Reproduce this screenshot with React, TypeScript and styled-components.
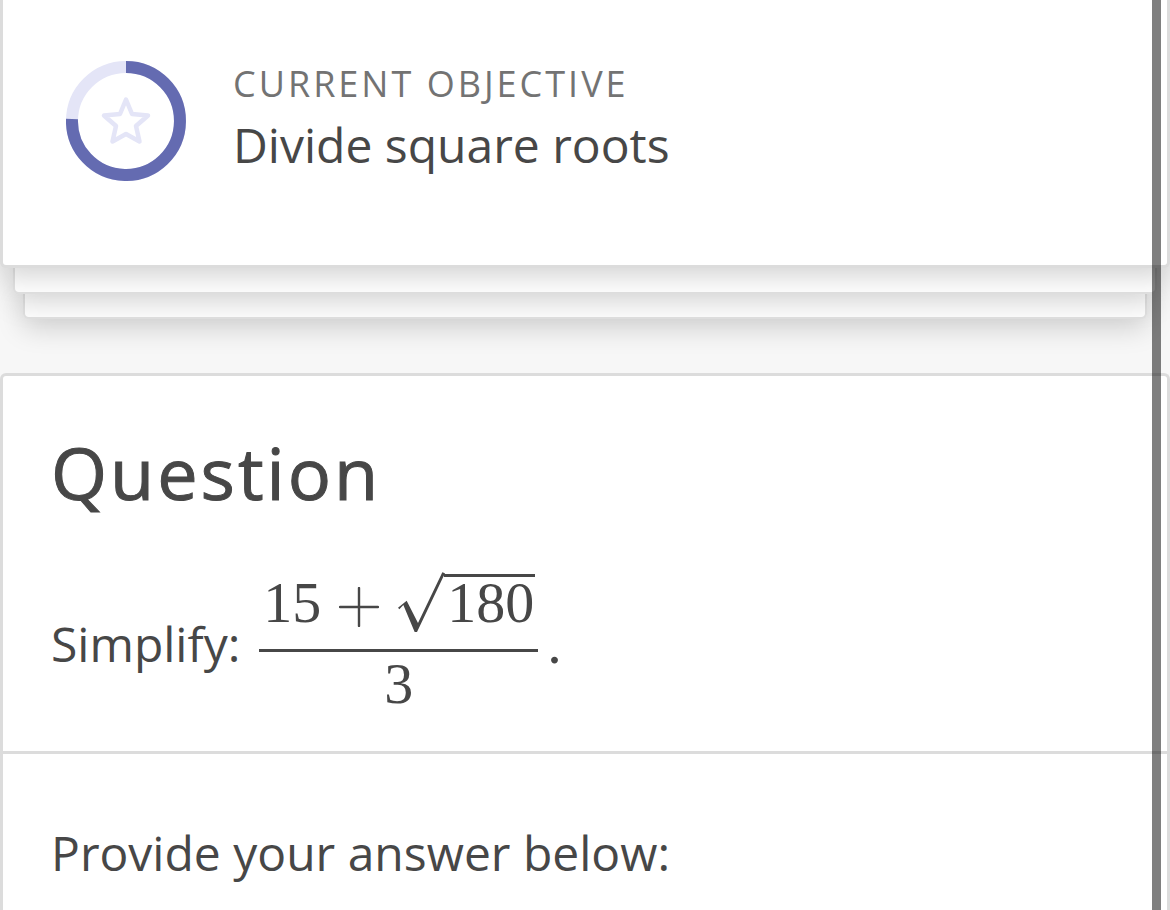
import React from 'react';
import styled, { createGlobalStyle } from 'styled-components';

const line = '#dcdcdc';
const ink = '#474747';

const GlobalStyle = createGlobalStyle`
  *, *::before, *::after { box-sizing: border-box; }
  body {
    margin: 0;
    background: #f7f7f7;
    color: ${ink};
    font-family: "Open Sans", "Noto Sans", sans-serif;
    overflow: hidden;
  }
`;

const Page = styled.main`
  display: flex;
  flex-direction: column;
  min-height: 100vh;
`;

const Stack = styled.header`
  display: flex;
  flex-direction: column;
  margin-bottom: 54px;
`;

const ObjectiveCard = styled.section`
  position: relative;
  z-index: 3;
  display: flex;
  gap: 47px;
  padding: 61px 63px 84px;
  background: #fff;
  border: 3px solid ${line};
  border-top: 0;
  border-radius: 0 0 6px 6px;
  box-shadow: 0 8px 28px rgba(0, 0, 0, 0.18);
`;

const Sheet = styled.div<{ $depth: number }>`
  position: relative;
  z-index: ${({ $depth }) => 3 - $depth};
  height: ${({ $depth }) => ($depth === 1 ? 26 : 25)}px;
  margin: 0 ${({ $depth }) => 3 + $depth * 10}px;
  background: #fff;
  border: 2px solid #e2e2e2;
  border-top: 0;
  border-radius: 0 0 6px 6px;
  box-shadow: 0 8px 28px rgba(0, 0, 0, 0.18);
`;

const Ring = styled.svg`
  flex: none;
  width: 120px;
  height: 120px;
`;

const ObjectiveText = styled.div`
  display: flex;
  flex-direction: column;
  gap: 6px;
`;

const Eyebrow = styled.p`
  margin: 0;
  font-size: 36px;
  line-height: 46px;
  letter-spacing: 3px;
  text-transform: uppercase;
  color: #737373;
`;

const Body = styled.p`
  margin: 0;
  font-size: 48px;
  line-height: 64px;
`;

const QuestionCard = styled.article`
  flex: 1;
  background: #fff;
  border: 3px solid ${line};
  border-bottom: 0;
  border-radius: 6px 6px 0 0;
`;

const Prompt = styled.section`
  padding: 48px 48px 35px;
`;

const Title = styled.h1`
  margin: 0 0 51px;
  font-size: 72px;
  line-height: 96px;
  font-weight: 400;
  letter-spacing: 3px;
  -webkit-text-stroke: 1px ${ink};
`;

const Statement = styled.div`
  display: flex;
  align-items: center;
`;

const MathText = styled.span`
  font-family: "Liberation Serif", "Times New Roman", serif;
  font-size: 58px;
  line-height: 64px;
`;

const Fraction = styled(MathText)`
  display: flex;
  flex-direction: column;
  align-items: center;
  margin: 0 9px 0 19px;
`;

const Numerator = styled.span`
  display: flex;
  padding: 0 4px 14px;
  border-bottom: 3px solid ${ink};
`;

const Plus = styled.svg`
  width: 40px;
  height: 40px;
  margin: 16px 19px 0 18px;
`;

const Root = styled.span`
  display: flex;
`;

const Radical = styled.svg`
  width: 47px;
  height: 60px;
  margin-top: 1px;
`;

const Radicand = styled.span`
  position: relative;
  padding-left: 2px;
  &::before {
    content: '';
    position: absolute;
    top: 3px;
    left: -1px;
    right: -1px;
    height: 3px;
    background: ${ink};
  }
`;

const Answer = styled.section`
  padding: 67px 48px;
  border-top: 3px solid ${line};
`;

const ScrollThumb = styled.div`
  position: fixed;
  z-index: 10;
  top: 0;
  bottom: 0;
  right: 9px;
  width: 9px;
  background: rgba(0, 0, 0, 0.5);
`;

function ProgressRing() {
  return (
    <Ring viewBox="0 0 120 120" role="img" aria-label="Objective progress">
      <circle cx="60" cy="60" r="54" fill="none" stroke="#e4e5f7" strokeWidth="12" />
      <path
        d="M60 6 A54 54 0 1 1 6 58"
        fill="none"
        stroke="#646bb1"
        strokeWidth="12"
      />
      <path
        d="M60 38.500 L66 53 L82 54.500 L70 65 L73.500 80.500 L60 73 L46.500 80.500 L50 65 L38 54.500 L54 53 Z"
        fill="none"
        stroke="#e4e5f7"
        strokeWidth="4.500"
        strokeLinejoin="round"
      />
    </Ring>
  );
}

export default function App() {
  return (
    <>
      <GlobalStyle />
      <Page>
        <Stack>
          <ObjectiveCard>
            <ProgressRing />
            <ObjectiveText>
              <Eyebrow>Current Objective</Eyebrow>
              <Body>Divide square roots</Body>
            </ObjectiveText>
          </ObjectiveCard>
          <Sheet $depth={1} />
          <Sheet $depth={2} />
        </Stack>
        <QuestionCard>
          <Prompt>
            <Title>Question</Title>
            <Statement>
              <Body>Simplify:</Body>
              <Fraction>
                <Numerator>
                  <span>15</span>
                  <Plus viewBox="0 0 40 40" role="img" aria-label="plus">
                    <path d="M1 20 H39 M20 1 V39" stroke={ink} strokeWidth="2.4" strokeLinecap="round" />
                  </Plus>
                  <Root>
                    <Radical viewBox="0 0 141 180" role="img" aria-label="square root of">
                      <path d="M0 107 L26 86 L60 153 L133 1 L141 4 L57 180 L50 180 L16 99 L4 112 Z" fill={ink} />
                    </Radical>
                    <Radicand>180</Radicand>
                  </Root>
                </Numerator>
                <span>3</span>
              </Fraction>
              <MathText>.</MathText>
            </Statement>
          </Prompt>
          <Answer>
            <Body>Provide your answer below:</Body>
          </Answer>
        </QuestionCard>
      </Page>
      <ScrollThumb />
    </>
  );
}
